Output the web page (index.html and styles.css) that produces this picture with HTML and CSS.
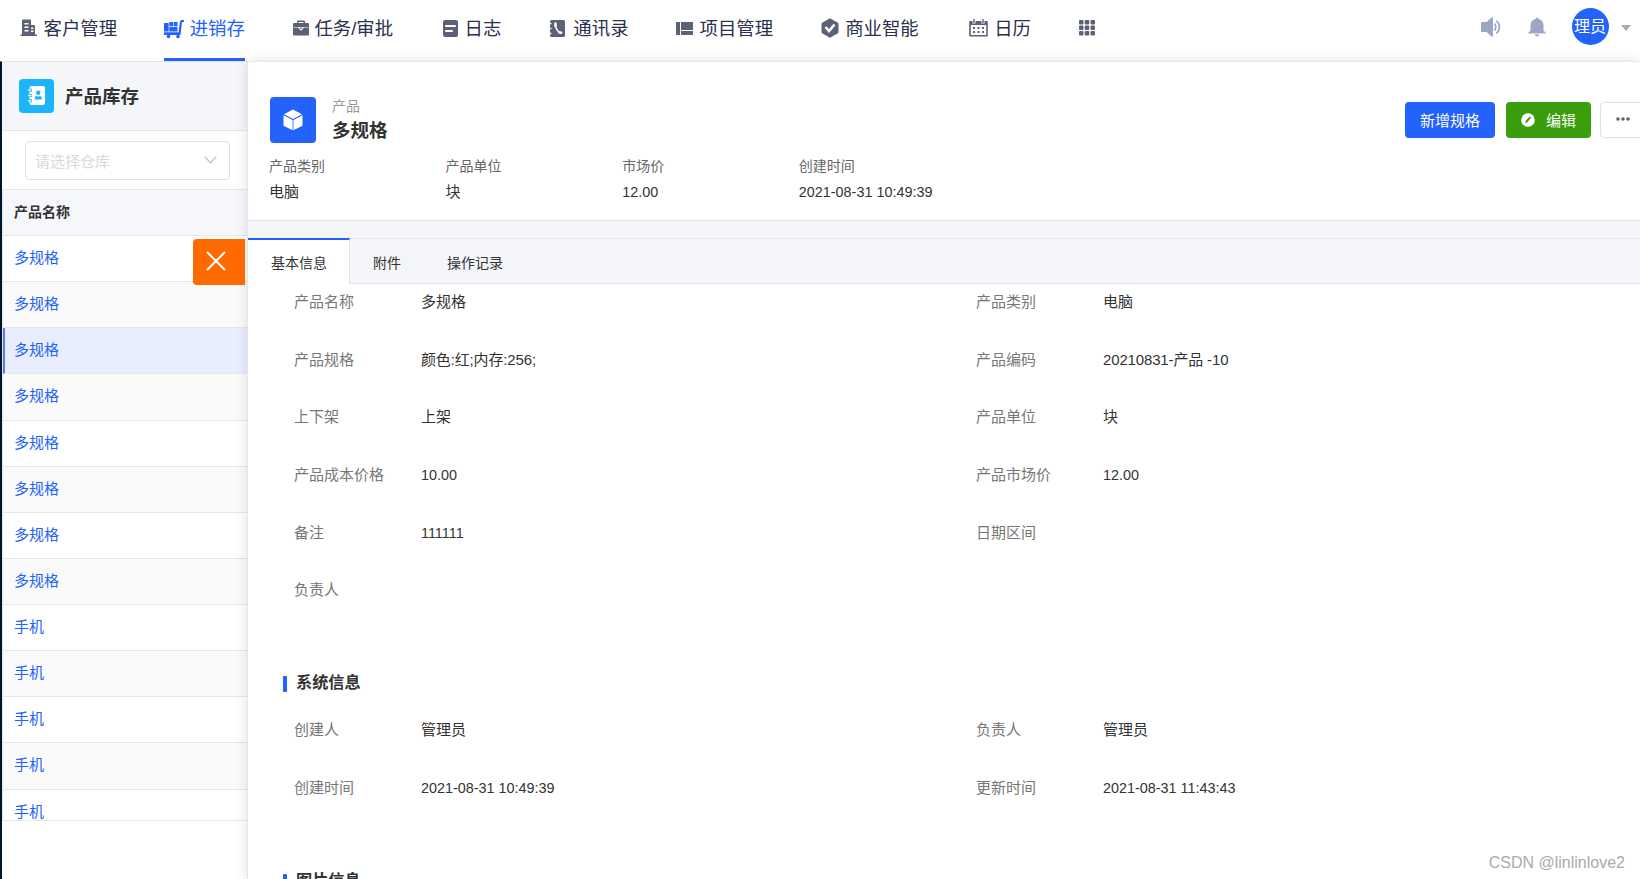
FILE: index.html
```
<!DOCTYPE html>
<html lang="zh-CN">
    <head>
        <meta charset="utf-8">
        <title>产品库存</title>
        <link rel="stylesheet" href="styles.css">
    </head>
    <body>
        <header class="navbar">
            <nav class="nav">
                <a class="nav-item">
                    <svg class="i-customer" width="18" height="18" viewBox="0 0 18 18"><path fill="currentColor" fill-rule="evenodd" d="M2 1.500Q2 .5 3 .5H10Q11 .5 11 1.500V6H14Q15 6 15 7V15.500H17V17H.5V15.500H2ZM4.500 4V5.500H8.500V4ZM4.500 7.500V9H8.500V7.500ZM4.500 11V12.500H8.500V11ZM11 8.500V10H13.500V8.500ZM11 11.500V13H13.500V11.500Z"/></svg>
                    <span>客户管理</span>
                </a>
                <a class="nav-item active">
                    <svg class="i-stock" width="20" height="20" viewBox="0 0 20 20"><g fill="currentColor"><path d="M0 4H4.700V12.500H0ZM5.300 3H9V7.300H5.300ZM9.600 3H13.500V7.300H9.600ZM5.300 7.900H13.500V12.500H5.300Z"/><path d="M0 13.200H14.500L16 2.500Q16.200 1 18 1H20V3H18L16.500 16H0Z"/><circle cx="4.500" cy="17.500" r="1.800"/><circle cx="14" cy="17.500" r="1.800"/></g></svg>
                    <span>进销存</span>
                </a>
                <a class="nav-item">
                    <svg class="i-task" width="16" height="16" viewBox="0 0 16 16"><path fill="currentColor" fill-rule="evenodd" d="M4 3V1.500Q4 .5 5 .5H11Q12 .5 12 1.500V3H15Q16 3 16 4V7H0V4Q0 3 1 3ZM5.500 2V3H10.500V2ZM0 7.600H5L8 10.800L11 7.600H16V14.500Q16 15.500 15 15.500H1Q0 15.500 0 14.500ZM6.500 7.600H9.500L8 9.300Z"/></svg>
                    <span>任务/审批</span>
                </a>
                <a class="nav-item">
                    <svg class="i-log" width="15" height="17" viewBox="0 0 15 17"><rect width="15" height="17" rx="2" fill="currentColor"/><path d="M3 6H12M3 11H9" stroke="#fff" stroke-width="2" stroke-linecap="round"/></svg>
                    <span>日志</span>
                </a>
                <a class="nav-item">
                    <svg class="i-book" width="16" height="17" viewBox="0 0 16 17"><rect x="1" width="15" height="17" rx="1.500" fill="currentColor"/><path d="M0 3.500H2.500M0 8.500H2.500M0 13.500H2.500" stroke="#fff" stroke-width="1.300"/><path d="M6.500 4Q6 9 10.800 12.700" fill="none" stroke="#fff" stroke-width="1.400"/><path d="M6.500 3.500V6M10.300 12.500L12.200 12.700" stroke="#fff" stroke-width="2.400" stroke-linecap="round"/></svg>
                    <span>通讯录</span>
                </a>
                <a class="nav-item">
                    <svg class="i-project" width="17" height="13" viewBox="0 0 17 13"><path fill="currentColor" d="M0 0H4V13H0ZM5 0H17V8H5ZM5 9H17V13H5Z"/></svg>
                    <span>项目管理</span>
                </a>
                <a class="nav-item">
                    <svg class="i-bi" width="18" height="20" viewBox="0 0 18 20"><path fill="currentColor" stroke="currentColor" stroke-linejoin="round" d="M9 .8L17 5.300V14.700L9 19.200L1 14.700V5.300Z"/><path d="M4.500 9L8 13L13.500 6.500" fill="none" stroke="#fff" stroke-width="2.600"/></svg>
                    <span>商业智能</span>
                </a>
                <a class="nav-item">
                    <svg class="i-calendar" width="19" height="18" viewBox="0 0 19 18"><path fill="none" stroke="currentColor" stroke-width="1.600" stroke-linejoin="round" d="M1 2.800H18V16.700H1Z"/><path fill="currentColor" d="M1 3H18V6H1ZM4 8H6V10H4ZM8.500 8H10.500V10H8.500ZM13 8H15V10H13ZM4 12H6V14H4ZM8.500 12H10.500V14H8.500ZM13 12H15V14H13Z"/><path d="M5 0V4.500M14 0V4.500" stroke="#fff" stroke-width="3"/><path d="M5 0V4M14 0V4" stroke="currentColor" stroke-width="1.400"/></svg>
                    <span>日历</span>
                </a>
                <a class="nav-item">
                    <svg class="i-more" width="16" height="16" viewBox="0 0 16 16"><g fill="currentColor"><rect width="4.500" height="4.500" rx="1"/><rect x="5.750" width="4.500" height="4.500" rx="1"/><rect x="11.500" width="4.500" height="4.500" rx="1"/><rect y="5.500" width="4.500" height="4.500" rx="1"/><rect x="5.750" y="5.500" width="4.500" height="4.500" rx="1"/><rect x="11.500" y="5.500" width="4.500" height="4.500" rx="1"/><rect y="11" width="4.500" height="4.500" rx="1"/><rect x="5.750" y="11" width="4.500" height="4.500" rx="1"/><rect x="11.500" y="11" width="4.500" height="4.500" rx="1"/></g></svg>
                </a>
            </nav>
            <div class="user">
                <svg class="i-sound" width="20" height="20" viewBox="0 0 20 20"><path fill="currentColor" d="M1 5H5.500L10.500 .5H12V19.500H10.500L5.500 15H1Q0 15 0 14V6Q0 5 1 5Z"/><path d="M13.500 6.500Q16 10 13.500 13.500M15.500 3.500Q21.500 10 15.500 16.500" fill="none" stroke="currentColor" stroke-width="1.700"/></svg>
                <svg class="i-bell" width="18" height="20" viewBox="0 0 18 20"><path fill="currentColor" d="M7.500 2Q7.500 .5 9 .5T10.500 2Q15.500 3 15.500 8.500V13.500L17.500 15.500V16.500H.5V15.500L2.500 13.500V8.500Q2.500 3 7.500 2ZM6.500 17.500H11.500Q11 19.500 9 19.500T6.500 17.500Z"/></svg>
                <div class="avatar">理员</div>
                <div class="caret"></div>
            </div>
        </header>
        <main>
            <aside class="sidebar">
                <div class="side-title">
                    <div class="side-icon">
                        <svg width="17" height="19" viewBox="0 0 17 19"><rect x="1.500" y="0" width="15.500" height="19" rx="2" fill="#fff"/><path d="M0 4.200H4M0 9.500H4M0 14.800H4" stroke="#1cb5fa" stroke-width="3"/><path d="M0 4.200H3.500M0 9.500H3.500M0 14.800H3.500" stroke="#fff" stroke-width="1.300"/><circle cx="10.200" cy="6.700" r="2.200" fill="#1cb5fa"/><path d="M6.500 13.500Q6.800 9.800 9 9.800L10.200 11L11.400 9.800Q13.700 9.800 14 13.500Z" fill="#1cb5fa"/></svg>
                    </div>
                    <h1>产品库存</h1>
                </div>
                <div class="filter">
                    <div class="select">
                        <span>请选择仓库</span>
                        <svg width="13" height="8" viewBox="0 0 13 8"><path d="M.7 .7L6.500 6.700L12.300 .7" fill="none" stroke="#c0c4cc" stroke-width="1.300"/></svg>
                    </div>
                </div>
                <div class="table">
                    <div class="th">产品名称</div>
                    <ul>
                        <li>多规格</li>
                        <li>多规格</li>
                        <li class="current">多规格</li>
                        <li>多规格</li>
                        <li>多规格</li>
                        <li>多规格</li>
                        <li>多规格</li>
                        <li>多规格</li>
                        <li>手机</li>
                        <li>手机</li>
                        <li>手机</li>
                        <li>手机</li>
                        <li>手机</li>
                    </ul>
                </div>
                <div class="close">
                    <svg width="20" height="20" viewBox="0 0 20 20"><path d="M1 1L19 19M19 1L1 19" stroke="#fff" stroke-width="2"/></svg>
                </div>
            </aside>
            <section class="detail">
                <div class="detail-head">
                    <div class="head-top">
                        <div class="head-icon">
                            <svg width="20" height="22" viewBox="0 0 20 22"><path fill="#fff" d="M10 .5L19 5.200L10 10L1 5.200ZM.5 6.200L9.600 10.900V21.200L.5 16.800ZM19.500 6.200L10.400 10.900V21.200L19.500 16.800Z"/></svg>
                        </div>
                        <div class="head-name">
                            <p>产品</p>
                            <h2>多规格</h2>
                        </div>
                        <div class="btns">
                            <button class="btn add">新增规格</button>
                            <button class="btn edit">
                                <svg width="14" height="14" viewBox="0 0 14 14"><circle cx="7" cy="7" r="6.800" fill="#fff"/><path d="M4.300 10.300L4.800 7.800L8.700 3.500L10 4.700L6.300 9.200Z" fill="#3a9e0c"/></svg>
                                <span>编辑</span>
                            </button>
                            <button class="btn more">
                                <svg width="14" height="4" viewBox="0 0 14 4"><g fill="#606266"><circle cx="2" cy="2" r="1.800"/><circle cx="7" cy="2" r="1.800"/><circle cx="12" cy="2" r="1.800"/></g></svg>
                            </button>
                        </div>
                    </div>
                    <ul class="summary">
                        <li><p>产品类别</p><div>电脑</div></li>
                        <li><p>产品单位</p><div>块</div></li>
                        <li><p>市场价</p><div class="num">12.00</div></li>
                        <li><p>创建时间</p><div class="num">2021-08-31 10:49:39</div></li>
                    </ul>
                </div>
                <div class="tabs">
                    <div class="tab active">基本信息</div>
                    <div class="tab">附件</div>
                    <div class="tab">操作记录</div>
                </div>
                <div class="content">
                    <div class="fields">
                        <div class="field"><label>产品名称</label><span>多规格</span></div>
                        <div class="field"><label>产品类别</label><span>电脑</span></div>
                        <div class="field"><label>产品规格</label><span class="mix">颜色:红;内存:256;</span></div>
                        <div class="field"><label>产品编码</label><span class="mix">20210831-产品 -10</span></div>
                        <div class="field"><label>上下架</label><span>上架</span></div>
                        <div class="field"><label>产品单位</label><span>块</span></div>
                        <div class="field"><label>产品成本价格</label><span class="num">10.00</span></div>
                        <div class="field"><label>产品市场价</label><span class="num">12.00</span></div>
                        <div class="field"><label>备注</label><span class="num">111111</span></div>
                        <div class="field"><label>日期区间</label><span></span></div>
                        <div class="field"><label>负责人</label><span></span></div>
                    </div>
                    <h3>系统信息</h3>
                    <div class="fields">
                        <div class="field"><label>创建人</label><span>管理员</span></div>
                        <div class="field"><label>负责人</label><span>管理员</span></div>
                        <div class="field"><label>创建时间</label><span class="num">2021-08-31 10:49:39</span></div>
                        <div class="field"><label>更新时间</label><span class="num">2021-08-31 11:43:43</span></div>
                    </div>
                    <h3>图片信息</h3>
                </div>
            </section>
        </main>
        <div class="watermark">CSDN @linlinlove2</div>
    </body>
</html>
```
FILE: styles.css
```
*{
    box-sizing:border-box;
}
body,ul,p,h1,h2,h3{
    margin:0;
    padding:0;
}
li{
    list-style:none;
}
body{
    height:879px;
    overflow:hidden;
    display:flex;
    flex-direction:column;
    position:relative;
    font-family:"Liberation Sans","Noto Sans CJK SC",sans-serif;
    font-size:15px;
    color:#333;
    background-color:#fff;
}
svg{
    display:block;
    flex:none;
}

/* top nav */
.navbar{
    flex:none;
    height:61px;
    display:flex;
    justify-content:space-between;
    padding-left:19.500px;
}
.nav{
    display:flex;
    gap:48px;
}
.nav-item{
    height:61px;
    display:flex;
    align-items:center;
    padding-bottom:5px;
    font-size:18.400px;
    line-height:28px;
    color:#2a304d;
    white-space:nowrap;
}
.nav-item:first-child{
    margin-right:-1.400px;
}
.nav-item span{
    padding-top:2px;
}
.nav-item svg{
    color:#5d6177;
    margin-right:8px;
}
.nav-item .i-customer,.nav-item .i-stock,.nav-item .i-bi{
    margin-right:6px;
}
.nav-item .i-task{
    margin-right:5.500px;
}
.nav-item .i-log{
    margin-left:1.500px;
    margin-right:7px;
}
.nav-item .i-project{
    margin-left:-1px;
    margin-right:7px;
}
.nav-item .i-calendar{
    margin-left:2px;
    margin-right:6.500px;
}
.nav-item.active{
    color:#2362fb;
    border-bottom:3px solid #2362fb;
    padding-bottom:2px;
}
.nav-item.active svg{
    margin-top:2px;
    color:#2362fb;
}
.user{
    height:53px;
    display:flex;
    align-items:center;
    color:#9ba7c3;
    padding-right:9.500px;
}
.i-bell{
    margin-left:27px;
}
.avatar{
    width:37px;
    height:37px;
    margin-left:26px;
    border-radius:50%;
    background-color:#2362fb;
    color:#fff;
    font-size:16px;
    line-height:37px;
    text-align:center;
}
.caret{
    margin-left:12px;
    margin-top:3px;
    border-style:solid;
    border-width:6px 5.500px 0;
    border-color:#aaa transparent transparent;
}

main{
    flex:1;
    min-height:0;
    display:flex;
}

/* left list */
.sidebar{
    width:247px;
    flex:none;
    position:relative;
    border-left:2px solid #001529;
    border-top:1px solid #e0e1e4;
}
.side-title{
    height:69px;
    display:flex;
    align-items:center;
    padding:0 0 0 17px;
    background-color:#f4f6fa;
    border-bottom:1px solid #e4e6ea;
}
.side-icon{
    width:35px;
    height:34px;
    border-radius:4px;
    background-color:#1cb5fa;
    display:flex;
    align-items:center;
    justify-content:center;
    padding-bottom:2px;
}
.side-title h1{
    margin-left:11px;
    padding-top:1px;
    font-size:18.500px;
    line-height:28px;
}
.filter{
    height:58px;
    padding:10px 17px 0 23px;
}
.select{
    height:39px;
    border:1px solid #dfe1e6;
    border-radius:4px;
    display:flex;
    align-items:center;
    justify-content:space-between;
    padding:0 12px 1px 9px;
    color:#d5d9e0;
}
.table{
    height:632px;
    overflow:hidden;
    border:1px solid #e4e6ea;
    border-right:0;
}
.th{
    height:46px;
    line-height:45px;
    padding-left:11px;
    border-bottom:1px solid #e6e8ec;
    background-color:#f5f7fa;
    font-size:14px;
    font-weight:bold;
}
.table li{
    height:46.130px;
    line-height:44px;
    padding-left:11px;
    border-bottom:1px solid #e4e6ea;
    color:#2362fb;
}
.table li:nth-child(even){
    background-color:#fafafa;
}
.table li.current{
    padding-left:9px;
    border-left:2px solid #5579ee;
    background-color:#e8eefe;
}
.close{
    position:absolute;
    top:177px;
    left:191px;
    width:52px;
    height:46px;
    border-radius:4px 0 0 4px;
    background-color:#ff6a00;
    display:flex;
    align-items:center;
    justify-content:center;
    padding:0 6px 3px 0;
    z-index:2;
}

/* right panel */
.detail{
    flex:1;
    min-width:0;
    position:relative;
    z-index:1;
    display:flex;
    flex-direction:column;
    background-color:#fff;
    border-top:1px solid #e8e8e8;
    border-left:1px solid #e4e6ee;
    box-shadow:0 0 12px rgba(0,0,0,0.12);
}
.detail-head{
    flex:none;
    height:159px;
    padding:35px 0 0 22px;
    border-bottom:1px solid #e1e3e7;
}
.head-top{
    display:flex;
    align-items:center;
    height:46px;
}
.head-icon{
    width:46px;
    height:46px;
    flex:none;
    border-radius:4px;
    background-color:#2362fb;
    display:flex;
    align-items:center;
    justify-content:center;
}
.head-name{
    margin-left:16px;
    padding-top:2px;
}
.head-name p{
    font-size:14px;
    line-height:20px;
    color:#999;
}
.head-name h2{
    font-size:18.500px;
    line-height:30px;
}
.btns{
    display:flex;
    margin-left:auto;
    margin-right:-5px;
}
.btn{
    height:36px;
    padding:0 0 2px;
    border:0;
    border-radius:4px;
    color:#fff;
    font-family:inherit;
    font-size:15px;
    display:flex;
    align-items:center;
    justify-content:center;
}
.btn.add{
    width:90px;
    background-color:#2362fb;
}
.btn.edit{
    width:85px;
    margin-left:11px;
    background-color:#3a9e0c;
}
.btn.edit svg{
    margin-top:2px;
}
.btn.edit span{
    margin-left:11px;
}
.btn.more{
    width:45px;
    margin-left:9px;
    border:1px solid #dfe1e6;
    background-color:#fff;
}
.summary{
    display:flex;
    margin:13px 0 0 -1px;
}
.summary li{
    width:176.600px;
}
.summary p{
    font-size:14px;
    line-height:20px;
    color:#666;
}
.summary div{
    height:26px;
    line-height:32px;
    white-space:nowrap;
}
.summary .num,.field .num{
    font-size:14.400px;
}
.tabs{
    flex:none;
    height:63px;
    display:flex;
    padding-top:17px;
    background-color:#f4f5f9;
    border-bottom:1px solid #e1e4ea;
}
.tab{
    height:46px;
    padding:0 23px;
    border-top:1px solid #e4e6ea;
    font-size:14px;
    line-height:48px;
}
.tab:last-child{
    flex:1;
}
.tab.active{
    width:102px;
    margin-bottom:-1px;
    padding:0 0 0 23px;
    border-top:2px solid #2362fb;
    border-right:1px solid #e1e4ea;
    background-color:#fff;
    line-height:46px;
}
.content{
    flex:1;
    min-height:0;
    overflow:hidden;
    padding:5px 0 0 35px;
}
.fields{
    display:grid;
    grid-template-columns:682px 1fr;
    grid-auto-rows:57.650px;
    padding-left:11px;
}
.field{
    display:flex;
    line-height:26px;
}
.field label{
    width:127px;
    color:#777;
}
.field .mix{
    letter-spacing:-0.150px;
}
.content h3{
    display:flex;
    align-items:flex-start;
    height:26px;
    margin:36px 0 20.500px;
    font-size:16.200px;
    line-height:22px;
}
.content h3::before{
    content:'';
    width:4px;
    height:16px;
    margin-top:5px;
    margin-right:9px;
    border-radius:1px;
    background-color:#2362fb;
}

.watermark{
    position:absolute;
    right:15px;
    bottom:5px;
    z-index:3;
    font-size:16px;
    line-height:22px;
    color:#aaa;
    text-shadow:1px 1px 0 #fff;
}
```
